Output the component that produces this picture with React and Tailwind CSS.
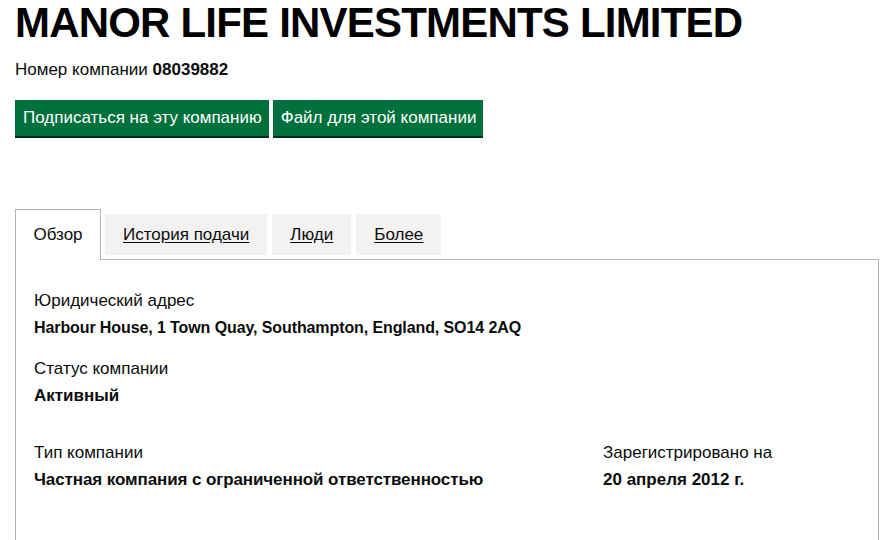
export default function App() {
    const tabs = ["История подачи", "Люди", "Более"];

    return (
        <div className="min-h-[540px] bg-white text-[#0b0c0c] font-['Liberation_Sans',Arial,sans-serif] pl-[15px] pr-[9px]">
            {/* Заголовок */}
            <h1 className="text-[42px] leading-[46px] font-bold tracking-[-0.8px] text-black">
                MANOR LIFE INVESTMENTS LIMITED
            </h1>

            <p className="text-[17px] leading-[20px] mt-[14px]">
                Номер компании <strong className="font-bold">08039882</strong>
            </p>

            {/* Кнопки */}
            <div className="flex gap-[4px] mt-[20px]">
                <button className="h-[36px] pl-[8px] pr-[7px] bg-[#00703c] text-white text-[17px] leading-[20px] shadow-[0_2px_0_#002d18]">
                    Подписаться на эту компанию
                </button>
                <button className="h-[36px] pl-[8px] pr-[7px] bg-[#00703c] text-white text-[17px] leading-[20px] shadow-[0_2px_0_#002d18]">
                    Файл для этой компании
                </button>
            </div>

            {/* Вкладки */}
            <div className="mt-[73px] flex items-end">
                <div className="relative z-10 w-[86px] h-[51px] border border-b-0 border-[#b1b4b6] bg-white flex items-center justify-center text-[17px] -mb-px">
                    Обзор
                </div>
                <div className="flex gap-[5px] ml-[4px] mb-[4px]">
                    {tabs.map((t) => (
                        <a
                            key={t}
                            href="#"
                            className="h-[41px] px-[18px] bg-[#f3f2f1] flex items-center text-[17px] underline underline-offset-[2px] text-[#0b0c0c]"
                        >
                            {t}
                        </a>
                    ))}
                </div>
            </div>

            {/* Панель */}
            <div className="border border-[#b1b4b6] w-[864px] h-[290px] px-[18px] pt-[31px]">
                <dl className="text-[17px] leading-[20px]">
                    <dt>Юридический адрес</dt>
                    <dd className="font-bold mt-[7px] text-[16px] tracking-[-0.1px]">
                        Harbour House, 1 Town Quay, Southampton, England, SO14 2AQ
                    </dd>

                    <dt className="mt-[21px]">Статус компании</dt>
                    <dd className="font-bold mt-[7px]">Активный</dd>
                </dl>

                <div className="flex mt-[37px] text-[17px] leading-[20px]">
                    <dl className="w-[569px]">
                        <dt>Тип компании</dt>
                        <dd className="font-bold mt-[7px] tracking-[-0.1px]">
                            Частная компания с ограниченной ответственностью
                        </dd>
                    </dl>
                    <dl>
                        <dt>Зарегистрировано на</dt>
                        <dd className="font-bold mt-[7px]">20 апреля 2012 г.</dd>
                    </dl>
                </div>
            </div>
        </div>
    );
}
